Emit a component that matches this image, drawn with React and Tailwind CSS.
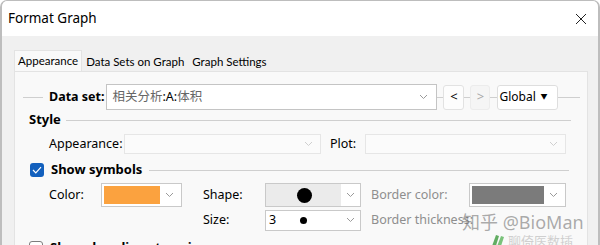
import React from 'react';

const ui = { fontFamily: '"Noto Sans", "Open Sans", "Noto Sans CJK SC", sans-serif' };
const tabFont = { fontFamily: 'Lato, "Noto Sans", sans-serif' };

function Chevron({ className = 'text-[#7a7a7a]' }) {
  return (
    <svg width="9" height="6" viewBox="0 0 9 6" className={className}>
      <path d="M1 1l3.5 3.5L8 1" fill="none" stroke="currentColor" strokeWidth="1" />
    </svg>
  );
}

function Line({ w }) {
  return <div className={`h-px bg-[#cfcfcf] ${w}`} />;
}

function Check({ checked }) {
  return checked ? (
    <div className="flex h-[14px] w-[14px] items-center justify-center rounded-[3px] bg-[#1360bd]">
      <svg width="10" height="8" viewBox="0 0 10 8">
        <path d="M1 4l2.8 2.8L9 1.2" fill="none" stroke="white" strokeWidth="1.2" />
      </svg>
    </div>
  ) : (
    <div className="h-[14px] w-[14px] rounded-[3px] border border-[#7d7d7d] bg-white" />
  );
}

function SwatchCombo({ fill, w }) {
  return (
    <div className={`flex h-[24px] ${w} items-center border border-[#c9c9c9] bg-white p-[2px]`}>
      <div className={`h-full flex-1 ${fill}`} />
      <div className="flex w-[19px] justify-center">
        <Chevron className="text-[#9a9a9a]" />
      </div>
    </div>
  );
}

export default function App() {
  return (
    <div
      className="relative h-[245px] w-[600px] overflow-hidden rounded-t-[7px] border-x-2 border-t border-[#bdbdbd] bg-[#f0f0f0] text-black"
      style={ui}
    >
      {/* title bar */}
      <div className="flex h-[35px] items-center justify-between bg-white pl-[6px] pr-[11px]">
        <span className="text-[13.5px]">Format Graph</span>
        <svg width="12" height="12" viewBox="0 0 12 12">
          <path d="M1 1l10 10M11 1L1 11" stroke="#222" strokeWidth="1" />
        </svg>
      </div>

      <div className="pl-[12px] pr-[10px] pt-[14px]">
        {/* tabs */}
        <div className="flex h-[21px] items-end text-[11.5px]" style={tabFont}>
          <div className="flex h-[21px] items-center border-x border-t border-[#e3e3e3] bg-[#f9f9f9] px-[3px]">
            Appearance
          </div>
          <div className="flex h-[19px] items-center px-[4px]">Data Sets on Graph</div>
          <div className="flex h-[19px] items-center px-[4px]">Graph Settings</div>
        </div>

        {/* panel */}
        <div className="h-[200px] border border-[#e3e3e3] bg-[#f9f9f9] text-[12.5px]">
          {/* Data set row */}
          <div className="mt-[12px] flex h-[26px] items-center pl-[8px]">
            <Line w="w-[20px]" />
            <span className="ml-[6px] mr-[2px] font-bold">Data set:</span>
            <div className="flex h-[26px] w-[331px] items-center justify-between border border-[#c4c4c4] bg-white pl-[5px] pr-[8px]">
              <span className="text-[#666]">
                相关分析<span className="text-black">:A:</span>体积
              </span>
              <Chevron className="text-[#9a9a9a]" />
            </div>
            <Line w="w-[6px]" />
            <div className="flex h-[25px] w-[21px] items-center justify-center rounded-[3px] border border-[#e2e2e2] bg-[#fdfdfd] text-[13px]">
              &lt;
            </div>
            <Line w="w-[6px]" />
            <div className="flex h-[25px] w-[20px] items-center justify-center rounded-[3px] border border-[#ececec] bg-[#f5f5f5] text-[13px] text-[#a8a8a8]">
              &gt;
            </div>
            <Line w="w-[7px]" />
            <div className="flex h-[25px] w-[61px] shrink-0 items-center justify-between rounded-[3px] border border-[#dedede] bg-white pl-[1px] pr-[10px] text-[12px]">
              <span>Global</span>
              <span className="text-[7px]">▼</span>
            </div>
            <Line w="w-[22px]" />
          </div>

          {/* Style */}
          <div className="mt-[2px] flex h-[16px] items-center pl-[14px]">
            <span className="text-[13px] font-bold">Style</span>
            <div className="ml-[5px] h-px w-[505px] bg-[#cfcfcf]" />
          </div>

          {/* Appearance / Plot */}
          <div className="mt-[6px] flex h-[20px] items-center pl-[34px]">
            <span className="w-[75px]">Appearance:</span>
            <div className="flex h-[20px] w-[197px] items-center justify-end border border-[#e6e6e6] bg-[#fbfbfb] pr-[7px]">
              <Chevron className="text-[#cfcfcf]" />
            </div>
            <span className="ml-[9px] w-[35px]">Plot:</span>
            <div className="flex h-[20px] w-[201px] items-center justify-end border border-[#e6e6e6] bg-[#fbfbfb] pr-[7px]">
              <Chevron className="text-[#cfcfcf]" />
            </div>
          </div>

          {/* Show symbols */}
          <div className="mt-[8px] flex h-[16px] items-center pl-[15px]">
            <Check checked />
            <span className="ml-[7px] text-[13px] font-bold">Show symbols</span>
            <div className="ml-[7px] h-px w-[420px] bg-[#cfcfcf]" />
          </div>

          {/* Color / Shape / Border color */}
          <div className="mt-[5px] flex h-[24px] items-center pl-[34px]">
            <span className="w-[52px]">Color:</span>
            <SwatchCombo fill="bg-[#fba23f]" w="w-[81px]" />
            <span className="ml-[21px] w-[62px]">Shape:</span>
            <div className="flex h-[24px] w-[96px] items-center border border-[#c9c9c9] bg-[#ebebeb]">
              <div className="flex flex-1 justify-center pl-[2px]">
                <div className="h-[15px] w-[15px] rounded-full bg-black" />
              </div>
              <div className="flex h-full w-[19px] items-center justify-center bg-white">
                <Chevron className="text-[#9a9a9a]" />
              </div>
            </div>
            <span className="ml-[10px] w-[98px] text-[#8e8e8e]">Border color:</span>
            <SwatchCombo fill="bg-[#7b7b7b]" w="w-[97px]" />
          </div>

          {/* Size / Border thickness */}
          <div className="mt-[2px] flex h-[22px] items-center pl-[188px]">
            <span className="w-[62px]">Size:</span>
            <div className="flex h-[21px] w-[96px] items-center border border-[#c9c9c9] bg-white pl-[3px] pr-[5px]">
              <span className="w-[31px]">3</span>
              <div className="h-[7px] w-[7px] rounded-full bg-black" />
              <div className="flex-1" />
              <Chevron className="text-[#9a9a9a]" />
            </div>
            <span className="ml-[10px] text-[#8e8e8e]">Border thickness:</span>
          </div>

          {/* next row, cut off */}
          <div className="mt-[9px] flex h-[16px] items-center pl-[14px]">
            <Check />
            <span className="ml-[7px] text-[13px] font-bold">Show drop lines to axis</span>
          </div>
        </div>
      </div>

      {/* watermark */}
      <div className="pointer-events-none absolute left-[460px] top-[210px] flex flex-col">
        <span className="text-[18px] leading-[23px] text-[#666]/55">知乎 @BioMan</span>
        <div className="-mt-[2px] ml-[28px] flex items-center">
          <svg width="16" height="17" viewBox="0 0 16 17" className="opacity-80">
            <path d="M1 17L6 3l3 1-4 13z" fill="#3c9a3c" />
            <path d="M6 17l5-13 3 1-4 12z" fill="#5bb55b" />
          </svg>
          <span className="ml-[2px] text-[13px] leading-[16px] text-[#bdbdbd]/70">聊倚医数插</span>
        </div>
      </div>
    </div>
  );
}
